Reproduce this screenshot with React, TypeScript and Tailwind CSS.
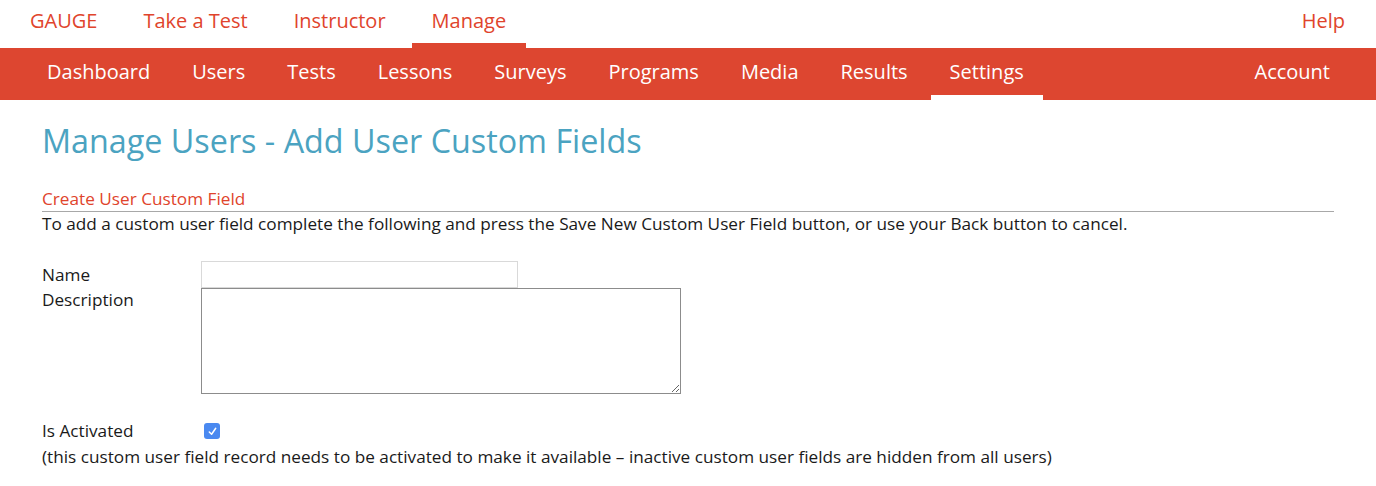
const topLinks = ['GAUGE', 'Take a Test', 'Instructor', 'Manage']
const subLinks = ['Dashboard', 'Users', 'Tests', 'Lessons', 'Surveys', 'Programs', 'Media', 'Results', 'Settings']

export default function App() {
  return (
    <div className="min-h-[486px] bg-white font-['Open_Sans',sans-serif] text-[#1a1a1a]">
      {/* top nav */}
      <div className="flex h-12 items-end justify-between px-[10px]">
        <ul className="flex h-12 gap-[6px]">
          {topLinks.map((l) => (
            <li key={l} className="flex flex-col text-[20px] text-[#e0442c]">
              <span className="flex h-[43px] items-center px-5 pb-[1px]">{l}</span>
              <span className={`h-[5px] ${l === 'Manage' ? 'bg-[#dd4630]' : ''}`} />
            </li>
          ))}
        </ul>
        <span className="flex h-[43px] items-center self-start px-[21px] pb-[1px] text-[20px] text-[#e0442c]">Help</span>
      </div>

      {/* sub nav */}
      <div className="flex h-[52px] items-stretch justify-between bg-[#dd4630] pl-[28px] pr-[46px]">
        <ul className="flex gap-[4px]">
          {subLinks.map((l) => (
            <li key={l} className="flex flex-col text-[20px] text-white">
              <span className="flex h-[47px] items-center px-[19px] pt-[1px]">{l}</span>
              <span className={`h-[5px] ${l === 'Settings' ? 'bg-white' : ''}`} />
            </li>
          ))}
        </ul>
        <span className="flex h-[47px] items-center pt-[1px] text-[20px] text-white">Account</span>
      </div>

      <div className="px-[42px] text-[17.2px]">
        <h1 className="mt-[18px] text-[32.3px] leading-[44px] text-[#4ba3c1]">Manage Users - Add User Custom Fields</h1>

        <div className="mt-[26px] w-[1292px] border-b border-[#a8a8a8] pb-[1px] leading-[22px] text-[#e0442c]">
          Create User Custom Field
        </div>
        <p className="leading-[24px]">
          To add a custom user field complete the following and press the Save New Custom User Field button, or use your Back button to cancel.
        </p>

        <div className="mt-[25px] flex items-center">
          <label className="w-[159px] leading-[24px]">Name</label>
          <input type="text" className="h-[27px] w-[317px] border border-[#d9d9d9] bg-white outline-none" />
        </div>
        <div className="flex">
          <label className="w-[159px] leading-[24px]">Description</label>
          <textarea className="h-[106px] w-[480px] border border-[#8c8c8c] bg-white outline-none" />
        </div>

        <div className="mt-[25px] flex items-center">
          <label className="w-[162px] leading-[24px]">Is Activated</label>
          <span className="flex h-4 w-4 items-center justify-center rounded-[3px] bg-[#4a89f0]">
            <svg width="11" height="11" viewBox="0 0 12 12" fill="none" stroke="white" strokeWidth="1.6" strokeLinecap="round" strokeLinejoin="round">
              <path d="M2.5 6.5 L5 9 L9.5 2.5" />
            </svg>
          </span>
        </div>
        <p className="mt-[2px] leading-[24px]">
          (this custom user field record needs to be activated to make it available – inactive custom user fields are hidden from all users)
        </p>
      </div>
    </div>
  )
}
